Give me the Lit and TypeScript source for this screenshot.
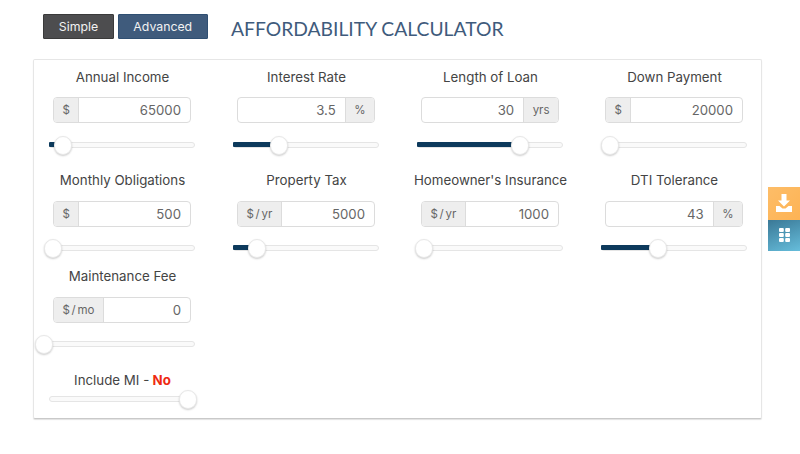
import { LitElement, html, css } from "lit";
import { customElement } from "lit/decorators.js";

interface Field {
  label: string;
  value: string;
  addon: string;
  after?: boolean;
  thumb: number;
  fill?: boolean;
}

const ROWS: Field[][] = [
  [
    { label: "Annual Income", value: "65000", addon: "$", thumb: 14, fill: true },
    { label: "Interest Rate", value: "3.5", addon: "%", after: true, thumb: 46, fill: true },
    { label: "Length of Loan", value: "30", addon: "yrs", after: true, thumb: 103, fill: true },
    { label: "Down Payment", value: "20000", addon: "$", thumb: 9 },
  ],
  [
    { label: "Monthly Obligations", value: "500", addon: "$", thumb: 4 },
    { label: "Property Tax", value: "5000", addon: "$ / yr", thumb: 24, fill: true },
    { label: "Homeowner's Insurance", value: "1000", addon: "$ / yr", thumb: 7 },
    { label: "DTI Tolerance", value: "43", addon: "%", after: true, thumb: 57, fill: true },
  ],
  [{ label: "Maintenance Fee", value: "0", addon: "$ / mo", thumb: -5 }],
];

function slider(thumb: number, fill = false) {
  return html`<div class="slider">
    <div class="track"></div>
    ${fill ? html`<div class="fill" style="width:${thumb}px"></div>` : ""}
    <div class="thumb" style="left:${thumb - 9.25}px"></div>
  </div>`;
}

@customElement("app-root")
export class AppRoot extends LitElement {
  static styles = css`
    :host {
      display: block;
      position: relative;
      width: 800px;
      height: 454px;
      background: #fff;
      overflow: hidden;
      font-family: "Inter", "Liberation Sans", sans-serif;
      color: #444;
    }
    .head {
      display: flex;
      align-items: flex-start;
      height: 24px;
      padding: 14px 0 0 43px;
    }
    .btn {
      box-sizing: border-box;
      height: 24.500px;
      display: flex;
      align-items: center;
      justify-content: center;
      color: #f2f2f2;
      font-size: 12.300px;
      border-radius: 1px;
    }
    .simple {
      width: 71px;
      background: #4d4d4f;
      border: 1px solid #3a3a3a;
    }
    .advanced {
      width: 89.500px;
      margin-left: 4px;
      background: #3f5b7c;
      border: 1px solid #2f4f72;
    }
    h1 {
      margin: 3px 0 0 23.500px;
      font-family: "Lato", sans-serif;
      font-weight: 400;
      font-size: 19.300px;
      line-height: 24px;
      color: #3f5b7c;
      white-space: nowrap;
    }
    .card {
      box-sizing: border-box;
      width: 729px;
      height: 360px;
      margin: 21px 0 0 33px;
      padding: 7px 13px 0 15px;
      border: 1px solid #e6e6e6;
      border-bottom-color: #c9c9c9;
      border-radius: 2px;
      box-shadow: 0 1px 1px rgba(0, 0, 0, 0.12);
    }
    .grid {
      display: grid;
      grid-template-columns: repeat(4, 147px);
      column-gap: 37px;
      grid-template-rows: 103px 96px 104px auto;
    }
    .label {
      display: flex;
      justify-content: center;
      gap: 0.25em;
      height: 20px;
      line-height: 20px;
      font-size: 13.300px;
      color: #444;
      white-space: nowrap;
    }
    .no {
      color: #ee2a12;
      font-weight: 700;
    }
    .group {
      box-sizing: border-box;
      display: flex;
      height: 26px;
      margin: 10px 5px 0 4px;
      border: 1px solid #dcdcdc;
      border-radius: 4px;
      overflow: hidden;
      font-size: 13.200px;
      color: #666;
    }
    .cell:nth-child(n + 5) .group {
      margin-top: 10.500px;
    }
    .value {
      flex: 1;
      min-width: 0;
      line-height: 24px;
      text-align: right;
      padding-right: 9px;
    }
    .addon {
      flex: none;
      line-height: 24px;
      padding: 0 8.500px;
      text-align: center;
      font-size: 11.500px;
      word-spacing: -1.500px;
      background: #eeeeee;
      color: #666;
    }
    .addon.left {
      border-right: 1px solid #dcdcdc;
    }
    .addon.right {
      border-left: 1px solid #dcdcdc;
    }
    .slider {
      position: relative;
      height: 18px;
      margin: 13px 1px 0 0;
    }
    .cell:nth-child(n + 5) .slider {
      margin-top: 12.500px;
    }
    .track {
      box-sizing: border-box;
      position: absolute;
      left: 0;
      right: 0;
      top: 6px;
      height: 6px;
      border: 1px solid #e5e5e5;
      border-radius: 3px;
      background: #fafafa;
    }
    .fill {
      position: absolute;
      left: 0;
      top: 6px;
      height: 5px;
      background: #0d3a5c;
      border-radius: 1px;
    }
    .thumb {
      box-sizing: border-box;
      position: absolute;
      top: 0;
      width: 18.500px;
      height: 18.500px;
      border-radius: 50%;
      background: #fff;
      border: 1px solid #e8e8e8;
      box-shadow: 0 1px 2px rgba(0, 0, 0, 0.2);
    }
    .toggle .slider {
      margin-top: 0;
    }
    .side {
      position: absolute;
      left: 768px;
      top: 187px;
      width: 32px;
    }
    .side div {
      display: flex;
      align-items: center;
      justify-content: center;
    }
    .dl {
      height: 32.500px;
      background: linear-gradient(135deg, #fdbd68, #fdb354);
    }
    .apps {
      height: 31.500px;
      background: linear-gradient(160deg, #3a7896, #66bddb);
    }
  `;

  render() {
    return html`
      <div class="head">
        <div class="btn simple">Simple</div>
        <div class="btn advanced">Advanced</div>
        <h1>AFFORDABILITY CALCULATOR</h1>
      </div>
      <div class="card">
        <div class="grid">
          ${ROWS.flat().map(
            (f, i) => html`<div class="cell" style=${i === 8 ? "grid-column:1;grid-row:3" : ""}>
              <div class="label">${f.label}</div>
              <div class="group">
                ${f.after ? "" : html`<div class="addon left">${f.addon}</div>`}
                <div class="value">${f.value}</div>
                ${f.after ? html`<div class="addon right">${f.addon}</div>` : ""}
              </div>
              ${slider(f.thumb, f.fill)}
            </div>`
          )}
          <div class="toggle" style="grid-column:1;grid-row:4">
            <div class="label"><span>Include MI -</span><span class="no">No</span></div>
            ${slider(139)}
          </div>
        </div>
      </div>
      <div class="side">
        <div class="dl">
          <svg width="16" height="18" viewBox="0 0 16 18">
            <path d="M5.500 0h5v6.500H14L8 12.500 2 6.500h3.500z" fill="#fff" />
            <path d="M0 12h3.500l3 2.500h3L12.500 12H16v6H0z" fill="#fff" />
          </svg>
        </div>
        <div class="apps">
          <svg width="11" height="14" viewBox="0 0 11 14" fill="#fff">
            <rect x="0" y="0" width="4.800" height="4" rx="1" />
            <rect x="6.200" y="0" width="4.800" height="4" rx="1" />
            <rect x="0" y="5" width="4.800" height="4" rx="1" />
            <rect x="6.200" y="5" width="4.800" height="4" rx="1" />
            <rect x="0" y="10" width="4.800" height="4" rx="1" />
            <rect x="6.200" y="10" width="4.800" height="4" rx="1" />
          </svg>
        </div>
      </div>
    `;
  }
}
